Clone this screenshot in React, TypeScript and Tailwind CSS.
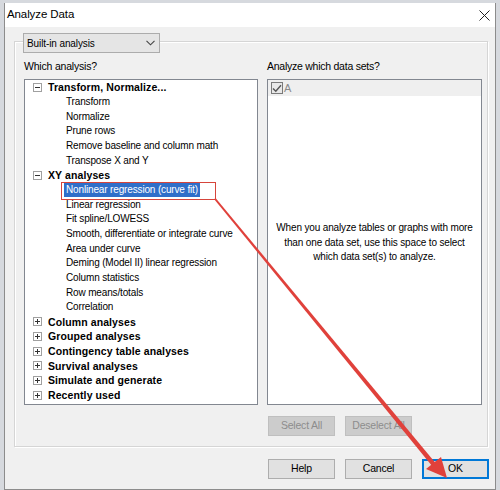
import React from "react";

type Row = { label: string; group?: boolean; open?: boolean; selected?: boolean };

const rows: Row[] = [
  { label: "Transform, Normalize...", group: true, open: true },
  { label: "Transform" },
  { label: "Normalize" },
  { label: "Prune rows" },
  { label: "Remove baseline and column math" },
  { label: "Transpose X and Y" },
  { label: "XY analyses", group: true, open: true },
  { label: "Nonlinear regression (curve fit)", selected: true },
  { label: "Linear regression" },
  { label: "Fit spline/LOWESS" },
  { label: "Smooth, differentiate or integrate curve" },
  { label: "Area under curve" },
  { label: "Deming (Model II) linear regression" },
  { label: "Column statistics" },
  { label: "Row means/totals" },
  { label: "Correlation" },
  { label: "Column analyses", group: true },
  { label: "Grouped analyses", group: true },
  { label: "Contingency table analyses", group: true },
  { label: "Survival analyses", group: true },
  { label: "Simulate and generate", group: true },
  { label: "Recently used", group: true },
];

function Expander({ open }: { open?: boolean }) {
  return (
    <span className="relative w-[9px] h-[9px] border border-[#a0a0a0] bg-white shrink-0">
      <span className="absolute left-[1px] right-[1px] top-[3px] h-[1px] bg-[#333]" />
      {!open && <span className="absolute top-[1px] bottom-[1px] left-[3px] w-[1px] bg-[#333]" />}
    </span>
  );
}

function TreeRow({ row }: { row: Row }) {
  if (row.group) {
    return (
      <div className="h-[14.67px] flex items-center pl-[8px] gap-[6px]">
        <Expander open={row.open} />
        <span className="text-[10.5px] font-bold text-black leading-none tracking-[0.1px]">{row.label}</span>
      </div>
    );
  }
  return (
    <div className="h-[14.67px] flex items-center pl-[39px]">
      <span
        className={
          "relative h-[14px] flex items-center px-[2px] text-[10px] tracking-[-0.15px] leading-none whitespace-nowrap " +
          (row.selected ? "bg-[#2f6fc9] text-white" : "text-black")
        }
      >
        {row.label}
        {row.selected && (
          <span className="absolute -top-[1px] -bottom-[3px] -left-[3px] -right-[16px] border border-[#d6453b]" />
        )}
      </span>
    </div>
  );
}

function Button({ label, disabled, primary }: { label: string; disabled?: boolean; primary?: boolean }) {
  return (
    <div
      className={
        "w-[67px] h-[20px] flex items-center justify-center text-[10.5px] tracking-[-0.2px] border " +
        (disabled
          ? "bg-[#cccccc] border-[#bfbfbf] text-[#8c8c8c]"
          : primary
          ? "bg-[#e1e1e1] border-[#0078d7] outline outline-1 outline-[#0078d7] -outline-offset-2 text-black"
          : "bg-[#e1e1e1] border-[#adadad] text-black")
      }
    >
      {label}
    </div>
  );
}

export default function App() {
  return (
    <div className="w-[500px] h-[490px] relative overflow-hidden bg-[#d6d9de] pt-[3px] pl-[4px] pr-[4px] font-['Liberation_Sans',Arial,sans-serif]">
      <div className="h-[487px] bg-[#f0f0f0] border-l border-r border-b border-[#8c8c8c] flex flex-col">
        {/* title bar */}
        <div className="h-[24px] bg-white flex items-center justify-between pl-[2px] pr-[6px] shrink-0">
          <span className="text-[11.5px] text-black tracking-[-0.1px]">Analyze Data</span>
          <svg width="11" height="11" viewBox="0 0 11 11" className="mr-[-1px]">
            <path d="M0.5 0.5 L10.5 10.5 M10.5 0.5 L0.5 10.5" stroke="#222" strokeWidth="1" />
          </svg>
        </div>

        {/* group box */}
        <div className="ml-[9px] mr-[7px] mt-[14px] h-[406px] border border-[#d5d5d5] shadow-[inset_1px_1px_0_#ffffff,1px_1px_0_#ffffff] flex flex-col">
          <div className="-mt-[9px] ml-[8px] w-[137px] h-[20px] bg-[#e5e5e5] border border-[#acacac] flex items-center justify-between pl-[3px] pr-[4px]">
            <span className="text-[10px] tracking-[-0.1px] text-black">Built-in analysis</span>
            <svg width="9" height="6" viewBox="0 0 9 6">
              <path d="M0.5 0.8 L4.5 4.8 L8.5 0.8" fill="none" stroke="#444" strokeWidth="1.1" />
            </svg>
          </div>

          <div className="flex gap-[9px] pl-[9px] mt-[7px]">
            {/* left column */}
            <div className="w-[234px] flex flex-col">
              <div className="h-[19px] text-[10.5px] tracking-[-0.2px] text-black leading-[12px]">Which analysis?</div>
              <div className="h-[326px] bg-white border border-[#828790] flex flex-col overflow-hidden">
                {rows.map((r) => (
                  <TreeRow key={r.label} row={r} />
                ))}
              </div>
            </div>

            {/* right column */}
            <div className="w-[215px] flex flex-col">
              <div className="h-[19px] text-[10.5px] tracking-[-0.25px] text-black leading-[12px]">Analyze which data sets?</div>
              <div className="h-[326px] bg-white border border-[#828790] flex flex-col">
                <div className="h-[16px] bg-[#efefef] flex items-center pl-[3px] gap-[1px]">
                  <span className="w-[12px] h-[12px] border border-[#7a7a7a] bg-[#e8e8e8] flex items-center justify-center">
                    <svg width="10" height="9" viewBox="0 0 10 9">
                      <path d="M1 4.5 L3.8 7.3 L9 1.2" fill="none" stroke="#555" strokeWidth="1.4" />
                    </svg>
                  </span>
                  <span className="text-[11px] text-[#8a8a8a] leading-none">A</span>
                </div>
                <div className="flex-1 flex items-center justify-center pb-[14px]">
                  <p className="text-[10px] tracking-[-0.15px] leading-[14.5px] text-center text-black whitespace-nowrap">
                    When you analyze tables or graphs with more
                    <br />
                    than one data set, use this space to select
                    <br />
                    which data set(s) to analyze.
                  </p>
                </div>
              </div>
              <div className="flex gap-[10px] mt-[11px] pl-[1px]">
                <Button label="Select All" disabled />
                <Button label="Deselect All" disabled />
              </div>
            </div>
          </div>
        </div>

        {/* bottom buttons */}
        <div className="flex gap-[10px] pl-[263px] mt-[12px]">
          <Button label="Help" />
          <Button label="Cancel" />
          <Button label="OK" primary />
        </div>
      </div>

      {/* red annotation arrow */}
      <svg className="absolute inset-0 pointer-events-none" width="500" height="490" viewBox="0 0 500 490">
        <polygon points="214,199 216,198.5 438,466 434.5,469" fill="#e0413b" />
        <polygon points="447,478 441,457 426,469" fill="#e0413b" />
      </svg>
    </div>
  );
}
